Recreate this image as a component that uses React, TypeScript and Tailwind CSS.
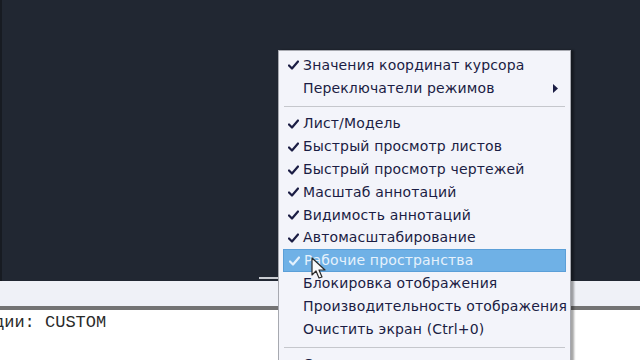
import React from "react";

const Check = ({ light }: { light?: boolean }) => (
  <svg width="11" height="10" viewBox="0 0 11 10" className="shrink-0">
    <path d="M1 5.5 L4 8.5 L10 1.5" fill="none" stroke={light ? "#e3f1fd" : "#1b1d44"} strokeWidth="2.2" strokeLinecap="round" strokeLinejoin="round" />
  </svg>
);

type Item = { t: string; c?: boolean; sub?: boolean; hi?: boolean } | "sep";

const items: Item[] = [
  { t: "Значения координат курсора", c: true },
  { t: "Переключатели режимов", sub: true },
  "sep",
  { t: "Лист/Модель", c: true },
  { t: "Быстрый просмотр листов", c: true },
  { t: "Быстрый просмотр чертежей", c: true },
  { t: "Масштаб аннотаций", c: true },
  { t: "Видимость аннотаций", c: true },
  { t: "Автомасштабирование", c: true },
  { t: "Рабочие пространства", c: true, hi: true },
  { t: "Блокировка отображения" },
  { t: "Производительность отображения" },
  { t: "Очистить экран (Ctrl+0)" },
  "sep",
  { t: "Строка состояния приложения" },
];

export default function App() {
  return (
    <div className="relative w-[640px] h-[360px] overflow-hidden bg-white" style={{ fontFamily: "'DejaVu Sans', Verdana, sans-serif" }}>
      <div className="flex flex-col h-full">
        <div className="h-[281px] bg-[#212732] border-l-2 border-[#171b22] relative">
          <div className="absolute left-[257px] top-[277px] w-[30px] h-[2px] bg-[#c9ccd2]" />
        </div>
        <div className="h-[25px] bg-[#eff1f7]" />
        <div className="h-[4px] bg-[#737373]" />
        <div className="flex-1 bg-white pt-[3px]">
          <div className="-ml-[6px] text-[17px] leading-[20px] text-[#2a2a2a]" style={{ fontFamily: "'Liberation Mono', 'Courier New', monospace" }}>
            дии: CUSTOM
          </div>
        </div>
      </div>

      <div className="absolute left-[278px] top-[50px] w-[293px] bg-[#f3f4fa] border border-[#a7a9b0] shadow-[3px_0_2px_rgba(0,0,0,0.35)] pt-[3px] pb-[4px]">
        {items.map((it, i) =>
          it === "sep" ? (
            <div key={i} className="h-[13px] flex items-center px-[5px]">
              <div className="h-[1px] w-full bg-[#c5c7cc]" />
            </div>
          ) : (
            <div
              key={i}
              className={
                "relative h-[22.8px] flex items-center mx-[4px] pl-[5px] pr-[8px] text-[14px] " +
                (it.hi ? "bg-[#6fb1e6] text-[#e6f2fc] border border-[#5b9fd8]" : "text-[#1b1d44]")
              }
            >
              <div className="w-[15px] shrink-0 flex items-center">{it.c ? <Check light={it.hi} /> : null}</div>
              <span className="flex-1 whitespace-nowrap tracking-[0.15px]">{it.t}</span>
              {it.sub ? (
                <svg width="5" height="9" viewBox="0 0 5 9" className="shrink-0"><path d="M0 0 L5 4.5 L0 9 Z" fill="#1b1d44" /></svg>
              ) : null}
            </div>
          )
        )}
      </div>

      <svg className="absolute left-[311px] top-[257px]" width="16" height="24" viewBox="0 0 16 24">
        <path d="M1 1 L1 18 L5 14 L8 21 L11 20 L8 13 L14 13 Z" fill="#fafafa" stroke="#2a2a2a" strokeWidth="1.2" strokeLinejoin="round" />
      </svg>
    </div>
  );
}
